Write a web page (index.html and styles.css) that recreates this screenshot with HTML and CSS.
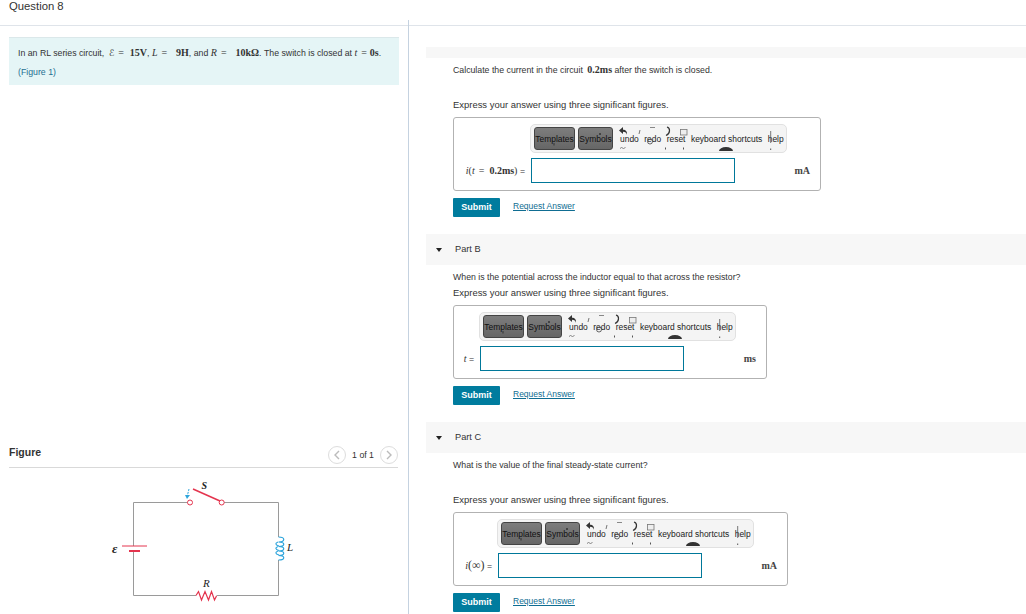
FILE: index.html
```html
<!DOCTYPE html>
<html lang="en">
<head>
<meta charset="utf-8">
<title>Question 8</title>
<link rel="stylesheet" href="styles.css">
</head>
<body>
<header class="page-title">Question 8</header>
<main class="layout">
  <section class="left">
    <div class="intro">
      <p class="intro-line">In an RL series circuit, <i class="script">ℰ</i><span class="m eq">=</span><b class="m">15V</b>, <i class="m">L</i><span class="m eq wide">=</span><b class="m">9H</b>, and <i class="m">R</i><span class="m eq wide">=</span><b class="m">10kΩ</b>. The switch is closed at <i class="m">t</i><span class="m eq tight">=</span><b class="m">0s</b>.</p>
      <p class="fig-link">(Figure 1)</p>
    </div>
    <div class="figure-head">
      <strong class="figure-title">Figure</strong>
      <div class="pager">
        <span class="circle"><svg width="8" height="10" viewBox="0 0 8 10"><path d="M6 1 2 5l4 4" fill="none" stroke="#bbb" stroke-width="1.4"/></svg></span>
        <span class="pager-text">1 of 1</span>
        <span class="circle"><svg width="8" height="10" viewBox="0 0 8 10"><path d="M2 1l4 4-4 4" fill="none" stroke="#bbb" stroke-width="1.4"/></svg></span>
      </div>
    </div>
    <svg class="circuit" width="200" height="144" viewBox="0 0 200 144">
      <g fill="none" stroke="#9a9a9a" stroke-width="1">
        <path d="M88 32.500H33.500V76M33.500 81V125.500H96"/>
        <path d="M124 32.500H178.500V67"/>
        <path d="M178.500 90V125.500H116.500"/>
      </g>
      <g fill="none" stroke="#e4344e">
        <path d="M93 19 120 31" stroke-width="1.500"/>
        <circle cx="90" cy="32.500" r="2.500" fill="#fff"/>
        <circle cx="121.700" cy="32.500" r="2.500" fill="#fff"/>
        <path d="M22 76h25" stroke-width="1"/>
        <path d="M29 81h11" stroke-width="2"/>
        <path d="M96 125.500l2.500-4 3 8.500 3.500-8.500 3.500 8.500 3-8.500 3 8.500 2-4" stroke-width="1.200"/>
      </g>
      <path d="M89 19l-1.500 6" fill="none" stroke="#2ea5dc" stroke-dasharray="2 1"/>
      <path d="M85 25h5l-3 4z" fill="#2ea5dc"/>
      <path d="M178.500 67c7 0 7 5 0 5 7 0 7 4.500 0 4.500 7 0 7 4.500 0 4.500 7 0 7 4.500 0 4.500 7 0 7 4.500 0 4.500M178 72c-3 1-3 3 1 4M178 76.500c-3 1-3 3 1 4M178 81c-3 1-3 3 1 4" fill="none" stroke="#2ea5dc" stroke-width="1.200"/>
      <text class="lbl" x="101.500" y="19">S</text>
      <text class="lbl plain" x="187" y="81">L</text>
      <text class="lbl plain" x="103" y="117">R</text>
      <text class="lbl big" x="12" y="83">ε</text>
    </svg>
  </section>
  <section class="right">
    <div class="top-bar"></div>
    <div class="part-body">
      <p class="q q-a">Calculate the current in the circuit <b class="m gap-l">0.2ms</b> after the switch is closed.</p>
      <p class="hint hint-a">Express your answer using three significant figures.</p>
      <div class="answer answer-a">
        <div class="toolbar">
          <span class="tb-btn t">Templates</span><span class="tb-btn s">Symbols</span>
          <span class="tb-links"><span>undo</span><span>redo</span><span>reset</span><span>keyboard shortcuts</span><span>help</span></span>
          <svg class="tb-ico" width="255" height="27" viewBox="0 0 255 27"><use href="#marks"/></svg>
        </div>
        <div class="row"><span class="label"><i class="m">i</i><span class="m">(</span><i class="m">t</i><span class="m eq small">=</span><b class="m">0.2ms</b><span class="m">)</span> =</span><span class="field"></span><span class="unit">mA</span></div>
      </div>
      <div class="actions"><span class="submit">Submit</span><a class="req" href="#">Request Answer</a></div>
    </div>
    <div class="part-bar"><span class="tri"></span><span class="part-name">Part B</span></div>
    <div class="part-body">
      <p class="q q-b">When is the potential across the inductor equal to that across the resistor?</p>
      <p class="hint hint-b">Express your answer using three significant figures.</p>
      <div class="answer answer-b">
        <div class="toolbar">
          <span class="tb-btn t">Templates</span><span class="tb-btn s">Symbols</span>
          <span class="tb-links"><span>undo</span><span>redo</span><span>reset</span><span>keyboard shortcuts</span><span>help</span></span>
          <svg class="tb-ico" width="255" height="27" viewBox="0 0 255 27"><use href="#marks"/></svg>
        </div>
        <div class="row"><span class="label"><i class="m">t</i> =</span><span class="field"></span><span class="unit">ms</span></div>
      </div>
      <div class="actions"><span class="submit">Submit</span><a class="req" href="#">Request Answer</a></div>
    </div>
    <div class="part-bar"><span class="tri"></span><span class="part-name">Part C</span></div>
    <div class="part-body">
      <p class="q q-c">What is the value of the final steady-state current?</p>
      <p class="hint hint-c">Express your answer using three significant figures.</p>
      <div class="answer answer-c">
        <div class="toolbar">
          <span class="tb-btn t">Templates</span><span class="tb-btn s">Symbols</span>
          <span class="tb-links"><span>undo</span><span>redo</span><span>reset</span><span>keyboard shortcuts</span><span>help</span></span>
          <svg class="tb-ico" width="255" height="27" viewBox="0 0 255 27"><use href="#marks"/></svg>
        </div>
        <div class="row"><span class="label"><i class="m">i</i><span class="m inf">(∞)</span> =</span><span class="field"></span><span class="unit">mA</span></div>
      </div>
      <div class="actions"><span class="submit">Submit</span><a class="req" href="#">Request Answer</a></div>
    </div>
  </section>
</main>
<svg class="defs" width="0" height="0">
  <defs>
    <g id="marks">
      <path d="M92 2 88 5.500 92 9V6.800c2.500 0 3.500 1 3.800 3 .8-3-1-5-3.800-5z" fill="#333"/>
      <path d="M89 23.500l1.500-1 2 1 2-1" fill="none" stroke="#666" stroke-width=".8"/>
      <path d="M109 5l-1 4" stroke="#555" stroke-width=".8"/>
      <path d="M119 2.500h5" stroke="#888"/>
      <circle cx="119" cy="16.500" r="2.500" fill="none" stroke="#444" stroke-width=".8"/>
      <path d="M136 2c3.500 1 3.500 6.500-1 8.500" fill="none" stroke="#333" stroke-width="1.200"/>
      <path d="M134.500 22.500v2M152.500 22.500v2M239.700 23.500v1.500" stroke="#555"/>
      <rect x="149.500" y="4.500" width="6.500" height="5.500" fill="#eee" stroke="#777" stroke-width=".8"/>
      <path d="M188 26a7 4 0 0 1 14 0z" fill="#333"/>
      <path d="M239.700 6v12" stroke="#555" stroke-width=".8"/>
      <path d="M23 18v2.500" stroke="#333"/>
      <circle cx="69" cy="9" r="1" fill="#333"/>
    </g>
  </defs>
</svg>
</body>
</html>
```
FILE: styles.css
```css
* { box-sizing: border-box; }
html, body { margin: 0; padding: 0; }
body { width: 1026px; height: 614px; overflow: hidden; background: #fff; color: #333; font: 8.750px/12px "Liberation Sans", Arial, sans-serif; }
p { margin: 0; }
.defs { position: absolute; }
.m { font-family: "Liberation Serif", serif; font-size: 10px; }
.inf { font-size: 12px; line-height: 12px; }
.script { font-family: "DejaVu Sans", sans-serif; font-size: 9px; font-style: italic; margin-left: 2px; }
.eq { margin: 0 6px 0 4px; }
.eq.wide { margin-right: 9px; }
.eq.tight { margin-right: 3px; }
.eq.small { margin: 0 5px 0 4px; }
.gap-l { margin-left: 2px; }
.page-title { height: 26px; padding-left: 9px; font-size: 11.300px; line-height: 12px; border-bottom: 1px solid #dfe4ea; }
.layout { display: flex; height: 588px; }
.left { width: 409px; flex: none; margin-top: -6px; padding: 0 9px; border-right: 1px solid #c5d2e0; }
.intro { margin-top: 17px; width: 390px; height: 48px; padding: 9px 9px 0; background: #e5f5f6; border-top: 1px solid #dbe8ea; }
.intro-line { white-space: nowrap; }
.fig-link { margin-top: 7px; color: #1f6f91; }
.figure-head { margin-top: 361px; width: 389px; height: 22px; display: flex; justify-content: space-between; align-items: flex-start; border-bottom: 1px solid #d9d9d9; }
.figure-title { font-size: 10.500px; }
.pager { display: flex; align-items: center; gap: 6px; }
.circle { width: 18px; height: 18px; border: 1px solid #ddd; border-radius: 50%; display: flex; align-items: center; justify-content: center; }
.circuit { display: block; margin: 2px 0 0 91px; }
.lbl { font: italic 700 10px "Liberation Serif", serif; fill: #222; }
.lbl.plain { font-weight: 400; font-size: 11px; }
.lbl.big { font-size: 13px; }
.right { flex: 1; min-width: 0; padding: 21px 0 0 17px; }
.top-bar { height: 11px; background: #f7f7f7; }
.part-body { padding-left: 27px; }
.q { margin-top: 6px; }
.hint { font-size: 9.450px; }
.hint-a, .hint-c { margin-top: 23px; }
.hint-b { margin-top: 4px; }
.answer { margin-top: 6px; height: 74px; border: 1px solid #b2b2b2; border-radius: 3px; padding-top: 6px; }
.answer-a { width: 368px; --offset: 76px; }
.answer-b { width: 314px; --offset: 25px; }
.answer-c { width: 335px; --offset: 43px; }
.toolbar { width: 257px; height: 29px; margin-left: var(--offset); background: #f4f4f4; border: 1px solid #e1e1e1; border-radius: 5px; display: flex; align-items: center; padding-left: 3px; position: relative; color: #222; font-size: 8.450px; }
.tb-btn { height: 23px; background: linear-gradient(#7d7d7d, #666); border: 1px solid #444; border-radius: 3px; display: flex; align-items: center; justify-content: center; color: #111; margin-right: 3px; }
.t { width: 41px; }
.s { width: 35px; }
.tb-links { display: flex; gap: 5.500px; margin-left: 4px; white-space: nowrap; }
.tb-ico { position: absolute; left: 0; top: 0; }
.row { display: flex; align-items: center; height: 25px; margin-top: 5px; }
.label { width: calc(var(--offset) + 1px); padding-right: 6px; text-align: right; flex: none; white-space: nowrap; }
.field { width: 204px; height: 25px; background: #fff; border: 1px solid #00789a; flex: none; }
.unit { margin-left: auto; padding-right: 10px; font: 700 10px "Liberation Serif", serif; color: #444; }
.actions { display: flex; align-items: center; margin-top: 7px; height: 19px; }
.submit { width: 47px; height: 19px; padding-bottom: 2px; background: #007c9e; color: #fff; font-weight: 700; font-size: 9px; border-radius: 1px; display: flex; align-items: center; justify-content: center; }
.req { margin: 0 0 3px 13px; color: #0f6d92; font-size: 8.500px; text-decoration: underline; }
.part-bar { height: 31px; margin-top: 17px; background: #f7f7f7; display: flex; align-items: center; font-size: 9.200px; }
.part-name { margin-bottom: 2px; }
.tri { width: 0; height: 0; border-left: 3.500px solid transparent; border-right: 3.500px solid transparent; border-top: 4px solid #222; margin: 0 13px 0 10px; }
```
